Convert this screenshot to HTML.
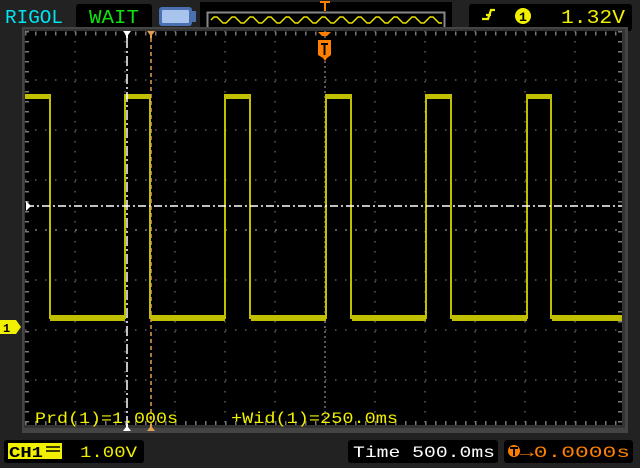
<!DOCTYPE html>
<html><head><meta charset="utf-8"><style>
html,body{margin:0;padding:0;background:#222;width:640px;height:468px;overflow:hidden}
svg{display:block}
text{font-family:"Liberation Mono",monospace}
</style></head><body>
<svg width="640" height="468" viewBox="0 0 640 468" xmlns="http://www.w3.org/2000/svg">
<rect width="640" height="468" fill="#222"/>
<!-- top bar -->
<text x="5" y="23" font-size="19" fill="#00e5f0" textLength="58" lengthAdjust="spacingAndGlyphs">RIGOL</text>
<rect x="76" y="4" width="76" height="26" rx="3" fill="#000"/>
<text x="89" y="23" font-size="19" fill="#10e010" textLength="50" lengthAdjust="spacingAndGlyphs">WAIT</text>
<rect x="159" y="7" width="33" height="19" rx="3" fill="#4a70b0"/>
<rect x="162" y="10" width="27" height="13" rx="1" fill="#a8c4ec"/>
<rect x="192" y="11" width="4" height="11" fill="#4a70b0"/>
<rect x="200" y="2" width="252" height="29" fill="#000"/>
<rect x="207.5" y="12.5" width="237" height="16" fill="none" stroke="#888" stroke-width="2"/>
<path id="zz" d="" fill="none"/>
<polyline fill="none" stroke="#e8e000" stroke-width="1.5" points="211,20 214,17 217,17 220,20 223,23 226,23 229,20 232,17 235,17 238,20 241,23 244,23 247,20 250,17 253,17 256,20 259,23 262,23 265,20 268,17 271,17 274,20 277,23 280,23 283,20 286,17 289,17 292,20 295,23 298,23 301,20 304,17 307,17 310,20 313,23 316,23 319,20 322,17 325,17 328,20 331,23 334,23 337,20 340,17 343,17 346,20 349,23 352,23 355,20 358,17 361,17 364,20 367,23 370,23 373,20 376,17 379,17 382,20 385,23 388,23 391,20 394,17 397,17 400,20 403,23 406,23 409,20 412,17 415,17 418,20 421,23 424,23 427,20 430,17 433,17 436,20 439,23 442,23"/>
<path d="M320 2h10M325 2v9" stroke="#ff8000" stroke-width="2"/>
<rect x="469" y="4" width="163" height="27" rx="3" fill="#000"/>
<path d="M483 19h5l3-9h4M482 19h3M486 15h5" stroke="#f0f000" stroke-width="2.2" fill="none"/>
<circle cx="523" cy="16" r="8" fill="#f0f000"/>
<text x="519" y="21" font-size="13" font-weight="bold" fill="#000">1</text>
<text x="561" y="23" font-size="19" fill="#f0f000" textLength="64" lengthAdjust="spacingAndGlyphs">1.32V</text>
<!-- screen -->
<rect x="22" y="27" width="606" height="406" fill="#444"/>
<rect x="24" y="29" width="601" height="399" fill="#333"/>
<rect x="25" y="31" width="597" height="394" fill="#000"/>
<g fill="#666">
<!-- dotted grid -->
<g id="grid"></g>
</g>
<g stroke="#5a5a5a" stroke-width="1.5" stroke-dasharray="1.5 8.5">
<path d="M75 31v394M125 31v394M175 31v394M225 31v394M275 31v394M375 31v394M425 31v394M475 31v394M525 31v394M575 31v394"/>
<path d="M25 80h597M25 130h597M25 180h597M25 280h597M25 330h597M25 380h597"/>
</g>
<g stroke="#777" stroke-width="1.5" stroke-dasharray="1.5 8.5">
<path d="M325 31v394" stroke-dasharray="2 3"/>
<path d="M25 230h597" stroke-dasharray="2 8"/>
</g>
<g stroke="#777" stroke-width="1.2">
<path d="M25 33.5h597" stroke-dasharray="1.5 8.5" stroke-width="4"/>
<path d="M25 423h597" stroke-dasharray="1.5 8.5" stroke-width="4"/>
<path d="M27 31v394" stroke-dasharray="1.5 8.5" stroke-width="4"/>
<path d="M620 31v394" stroke-dasharray="1.5 8.5" stroke-width="4"/>
</g>
<!-- waveform -->
<polyline fill="none" stroke="#c0c000" stroke-width="2" points="25,95 50,95 50,318 125,318 125,95 150,95 150,318 225,318 225,95 250,95 250,318 326,318 326,95 351,95 351,318 426,318 426,95 451,95 451,318 527,318 527,95 551,95 551,318 622,318"/>
<g fill="#c0c000">
<rect x="25" y="94" width="25" height="5"/><rect x="126" y="95" width="24" height="4"/><rect x="226" y="95" width="24" height="4"/><rect x="327" y="95" width="24" height="4"/><rect x="427" y="95" width="24" height="4"/><rect x="528" y="95" width="23" height="4"/>
<rect x="50" y="315" width="75" height="6"/><rect x="151" y="315" width="74" height="6"/><rect x="251" y="315" width="75" height="6"/><rect x="352" y="315" width="74" height="6"/><rect x="452" y="315" width="75" height="6"/><rect x="552" y="315" width="70" height="6"/>
</g>
<!-- cursors -->
<path d="M26 206h596" stroke="#fff" stroke-width="1.5" stroke-dasharray="8 3 2 3"/>
<path d="M26 201v10l5-5z" fill="#fff"/>
<path d="M127 38v392" stroke="#fff" stroke-width="1.5" stroke-dasharray="10 3 2 3"/>
<path d="M123 31h8l-3 4v3h-2v-3z" fill="#fff"/>
<path d="M151 38v392" stroke="#e0a050" stroke-width="1.5" stroke-dasharray="4 3"/>
<path d="M147 31h8l-3 4v3h-2v-3z" fill="#e0a050"/>
<path d="M123 431h8l-3-4v-3h-2v3z" fill="#fff"/>
<path d="M147 431h8l-3-4v-3h-2v3z" fill="#e0a050"/>
<!-- trigger marker -->
<path d="M318 32h13l-4 4h-5z" fill="#ff8000"/>
<path d="M318 40h13v15l-4 3-2 3-2-3-5-3z" fill="#ff8000"/>
<path d="M321 44h7M324.5 44v11" stroke="#000" stroke-width="2"/>
<!-- ch1 marker -->
<path d="M0 320h16l5 7-5 7H0z" fill="#f0f000"/>
<text x="3" y="332" font-size="12" font-weight="bold" fill="#000">1</text>
<!-- measurements -->
<text x="35" y="423" font-size="16" fill="#f0f000" textLength="143" lengthAdjust="spacingAndGlyphs">Prd(1)=1.000s</text>
<text x="231" y="423" font-size="16" fill="#f0f000" textLength="167" lengthAdjust="spacingAndGlyphs">+Wid(1)=250.0ms</text>
<!-- bottom bar -->
<rect x="4" y="440" width="140" height="23" rx="3" fill="#000"/>
<rect x="8" y="443" width="54" height="16" fill="#f0f000"/>
<text x="9" y="457" font-size="15" font-weight="bold" fill="#000" textLength="34" lengthAdjust="spacingAndGlyphs">CH1</text>
<path d="M46 447h14M46 451h14" stroke="#000" stroke-width="1.5"/>
<text x="80" y="457" font-size="16" fill="#f0f000" textLength="57" lengthAdjust="spacingAndGlyphs">1.00V</text>
<rect x="348" y="440" width="150" height="23" rx="3" fill="#000"/>
<text x="353" y="457" font-size="16" fill="#fff" textLength="142" lengthAdjust="spacingAndGlyphs">Time 500.0ms</text>
<rect x="504" y="440" width="129" height="23" rx="3" fill="#000"/>
<circle cx="514" cy="451" r="6" fill="#ff8000"/>
<path d="M510 448h8M514 448v8" stroke="#000" stroke-width="2"/>
<text x="520" y="457" font-size="16" fill="#ff8000" textLength="110" lengthAdjust="spacingAndGlyphs">→0.0000s</text>
</svg>
</body></html>
